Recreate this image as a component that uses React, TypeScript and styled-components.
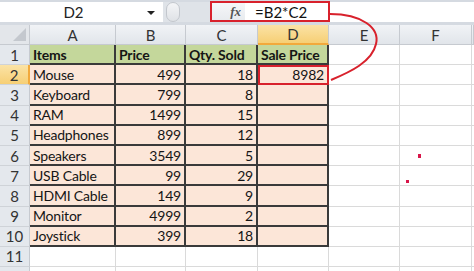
import styled, { createGlobalStyle, css } from "styled-components";

const GlobalStyle = createGlobalStyle`
  html, body {
    margin: 0;
    padding: 0;
    background: #ffffff;
    overflow: hidden;
  }
  body {
    font-family: "Lato", "Open Sans", sans-serif;
  }
`;

const Page = styled.div`
  position: relative;
  width: 474px;
  height: 271px;
  overflow: hidden;
  background: #ffffff;
`;

const FormulaBar = styled.div`
  display: flex;
  align-items: stretch;
  height: 20px;
  padding: 2px 0 3px;
  background: #d5dae1;
`;

const NameBox = styled.div`
  position: relative;
  width: 163px;
  background: #ffffff;
  display: flex;
  align-items: center;
  justify-content: center;
  font-size: 15px;
  color: #222;
  padding-right: 16px;
  box-sizing: border-box;
`;

const DropArrow = styled.span`
  position: absolute;
  right: 8px;
  top: 9px;
  width: 0;
  height: 0;
  border-left: 4px solid transparent;
  border-right: 4px solid transparent;
  border-top: 4px solid #222;
`;

const Splitter = styled.div`
  width: 47px;
  display: flex;
  align-items: center;
  padding-left: 3px;
  box-sizing: border-box;
  background: #dfe3e8;
`;

const Grip = styled.div`
  width: 12px;
  height: 18px;
  border-radius: 8px;
  background: linear-gradient(#f4f5f7, #dfe2e6);
  border: 1px solid #c3c7cd;
`;

const FxBox = styled.div`
  display: flex;
  width: 120px;
  border: 2px solid #d8212c;
  box-sizing: border-box;
  margin-top: -1px;
  height: 21px;
  background: #ffffff;
`;

const FxButton = styled.div`
  width: 33px;
  display: flex;
  align-items: center;
  justify-content: flex-end;
  padding-right: 4px;
  box-sizing: border-box;
  background: linear-gradient(#f5f6f8, #e8ebef);
  font-family: "Liberation Serif", serif;
  font-style: italic;
  font-weight: 700;
  font-size: 13px;
  color: #555;
`;

const FormulaText = styled.div`
  flex: 1;
  display: flex;
  align-items: center;
  padding-left: 10px;
  font-size: 15px;
  color: #111;
`;

const FormulaRest = styled.div`
  flex: 1;
  background: #ffffff;
`;

const Sheet = styled.div`
  display: grid;
  grid-template-columns: 30px 86px 70px 72px 71px 71px 72px 2px;
  grid-template-rows: 20px;
  grid-auto-rows: 20.2px;
`;

const Corner = styled.div`
  position: relative;
  background: #e3e6ea;
  border-right: 1px solid #c6cad0;
  border-bottom: 1px solid #c6cad0;
  box-sizing: border-box;
  &::after {
    content: "";
    position: absolute;
    right: 3px;
    bottom: 3px;
    width: 0;
    height: 0;
    border-left: 13px solid transparent;
    border-bottom: 13px solid #c4c8ce;
  }
`;

const ColHead = styled.div<{ $active?: boolean }>`
  display: flex;
  align-items: center;
  justify-content: center;
  font-size: 15px;
  color: #333;
  box-sizing: border-box;
  border-right: 1px solid #c6cad0;
  border-bottom: 1px solid #c6cad0;
  background: linear-gradient(#f1f3f6, #e1e5ea);
  ${(p) =>
    p.$active &&
    css`
      background: linear-gradient(#fbe3a6, #f6cf75);
      border-bottom: 2px solid #f2a93b;
      color: #333;
    `}
`;

const RowHead = styled.div<{ $active?: boolean }>`
  display: flex;
  align-items: center;
  justify-content: center;
  font-size: 15px;
  color: #333;
  box-sizing: border-box;
  border-right: 1px solid #c6cad0;
  border-bottom: 1px solid #cfd3d8;
  background: #e4e8ed;
  ${(p) =>
    p.$active &&
    css`
      background: linear-gradient(#fbe3a6, #f6cf75);
      border-right: 2px solid #f2a93b;
    `}
`;

type Fill = "green" | "peach" | "none";

const fills: Record<Fill, string> = {
  green: "#c4d79b",
  peach: "#fce6d8",
  none: "#ffffff",
};

const Cell = styled.div<{
  $fill: Fill;
  $num?: boolean;
  $bold?: boolean;
  $table?: boolean;
  $mark?: boolean;
}>`
  display: flex;
  align-items: center;
  justify-content: ${(p) => (p.$num ? "flex-end" : "flex-start")};
  padding: 0 3px 0 3px;
  box-sizing: border-box;
  font-size: 14px;
  letter-spacing: -0.2px;
  font-weight: ${(p) => (p.$bold ? 700 : 400)};
  color: #151515;
  white-space: nowrap;
  overflow: hidden;
  background: ${(p) => fills[p.$fill]};
  border-right: 1px solid #dadada;
  border-bottom: 1px solid #dadada;
  ${(p) =>
    p.$table &&
    css`
      border-right: 2px solid #3a3a3a;
      border-bottom: 2px solid #3a3a3a;
    `}
  ${(p) =>
    p.$mark &&
    css`
      outline: 2px solid #d8212c;
      outline-offset: -2px;
    `}
`;

const Annotation = styled.svg`
  position: absolute;
  left: 0;
  top: 0;
  pointer-events: none;
`;

const items: [string, number, number, number | null][] = [
  ["Mouse", 499, 18, 8982],
  ["Keyboard", 799, 8, null],
  ["RAM", 1499, 15, null],
  ["Headphones", 899, 12, null],
  ["Speakers", 3549, 5, null],
  ["USB Cable", 99, 29, null],
  ["HDMI Cable", 149, 9, null],
  ["Monitor", 4999, 2, null],
  ["Joystick", 399, 18, null],
];

const cols = ["A", "B", "C", "D", "E", "F"];

function Blank({ n }: { n: number }) {
  return (
    <>
      {Array.from({ length: n }).map((_, i) => (
        <Cell key={i} $fill="none" />
      ))}
    </>
  );
}

function Row({
  n,
  name,
  price,
  qty,
  sale,
}: {
  n: number;
  name: string;
  price: number;
  qty: number;
  sale: number | null;
}) {
  return (
    <>
      <RowHead $active={n === 2}>{n}</RowHead>
      <Cell $fill="peach" $table>{name}</Cell>
      <Cell $fill="peach" $num $table>{price}</Cell>
      <Cell $fill="peach" $num $table>{qty}</Cell>
      <Cell $fill="peach" $num $table $mark={n === 2}>
        {sale ?? ""}
      </Cell>
      <Blank n={3} />
    </>
  );
}

export default function App() {
  return (
    <Page>
      <GlobalStyle />
      <FormulaBar>
        <NameBox>
          D2
          <DropArrow />
        </NameBox>
        <Splitter>
          <Grip />
        </Splitter>
        <FxBox>
          <FxButton>fx</FxButton>
          <FormulaText>=B2*C2</FormulaText>
        </FxBox>
        <FormulaRest />
      </FormulaBar>

      <Sheet>
        <Corner />
        {cols.map((c) => (
          <ColHead key={c} $active={c === "D"}>
            {c}
          </ColHead>
        ))}
        <ColHead />

        <RowHead>1</RowHead>
        <Cell $fill="green" $bold $table>Items</Cell>
        <Cell $fill="green" $bold $table>Price</Cell>
        <Cell $fill="green" $bold $table>Qty. Sold</Cell>
        <Cell $fill="green" $bold $table>Sale Price</Cell>
        <Blank n={3} />

        {items.map(([name, price, qty, sale], i) => (
          <Row key={name} n={i + 2} name={name} price={price} qty={qty} sale={sale} />
        ))}

        <RowHead>11</RowHead>
        <Blank n={7} />
        <RowHead />
        <Blank n={7} />
      </Sheet>

      <Annotation width={474} height={271}>
        <path
          d="M330 14 C 362 14, 380 28, 376 44 C 372 62, 350 72, 331 80"
          fill="none"
          stroke="#d8212c"
          strokeWidth={2}
        />
        <rect x={418} y={154} width={3} height={4} fill="#d8164a" />
        <rect x={406} y={180} width={3} height={3} fill="#d8164a" />
      </Annotation>
    </Page>
  );
}
